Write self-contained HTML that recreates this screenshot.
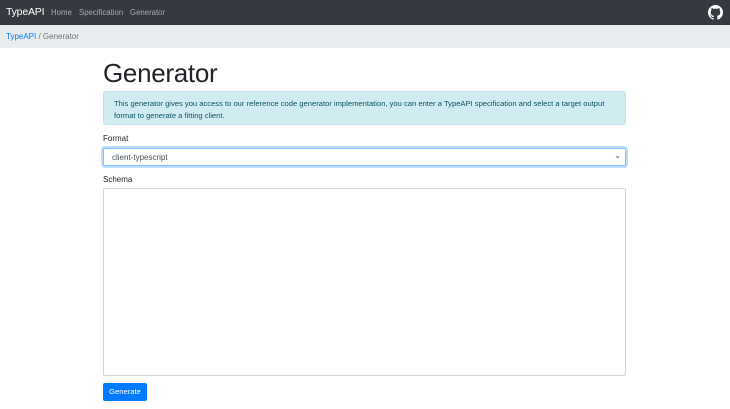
<!DOCTYPE html>
<html><head><style>
*{box-sizing:border-box;margin:0;padding:0}
body{width:730px;height:409px;overflow:hidden;background:#fff;font-family:"Liberation Sans",sans-serif;color:#212529;position:relative}
.nav{position:absolute;left:0;top:0;width:730px;height:25px;background:#343a40}
.brand{position:absolute;left:6px;top:6px;color:#fff;font-size:10.5px;letter-spacing:-0.2px}
.nl{position:absolute;top:7.5px;color:rgba(255,255,255,.55);font-size:7.8px;white-space:nowrap}
.bc{position:absolute;left:0;top:25px;width:730px;height:23px;background:#e9ecef;font-size:8px;color:#6c757d;padding:7px 6px}
.bc a{color:#007bff}
h1{position:absolute;left:103px;top:58px;font-size:26px;font-weight:400;color:#212529;letter-spacing:-0.3px}
.alert{position:absolute;left:103px;top:91px;width:523px;height:34px;background:#d1ecf1;border:1px solid #bee5eb;border-radius:3px;color:#0c5460;font-size:7.6px;line-height:11.5px;padding:6px 10px}
.lbl{position:absolute;left:103px;font-size:8px}
.sel{position:absolute;left:103px;top:148px;width:523px;height:18px;border:1px solid #80bdff;box-shadow:0 0 0 2px rgba(0,123,255,.25);border-radius:2px;font-size:8px;padding:4px 8px;color:#495057}
.sel span{position:absolute;right:4px;top:2px;font-size:8px}
.ta{position:absolute;left:103px;top:188px;width:523px;height:188px;border:1px solid #ced4da;border-radius:2px}
.btn{position:absolute;left:103px;top:383px;width:44px;height:18px;background:#007bff;border-radius:2px;color:#fff;font-size:7.6px;text-align:center;line-height:18px}
</style></head><body>
<div class="nav">
<div class="brand">TypeAPI</div>
<div class="nl" style="left:51px">Home</div>
<div class="nl" style="left:79px">Specification</div>
<div class="nl" style="left:130px">Generator</div>
<svg style="position:absolute;left:708px;top:5px" width="15" height="15" viewBox="0 0 16 16"><path fill="#fff" d="M8 0C3.58 0 0 3.58 0 8c0 3.54 2.29 6.53 5.47 7.59.4.07.55-.17.55-.38 0-.19-.01-.82-.01-1.49-2.01.37-2.530-.49-2.69-.94-.09-.23-.48-.94-.82-1.13-.28-.15-.68-.52-.01-.53.63-.01 1.080.58 1.23.82.72 1.21 1.87.87 2.33.66.07-.52.28-.87.51-1.07-1.78-.2-3.64-.89-3.64-3.95 0-.87.31-1.59.82-2.15-.08-.2-.36-1.02.08-2.12 0 0 .67-.21 2.2.82.64-.18 1.32-.27 2-.27.68 0 1.36.09 2 .27 1.53-1.04 2.2-.82 2.2-.82.44 1.1.16 1.92.08 2.12.51.56.82 1.27.82 2.15 0 3.07-1.87 3.75-3.65 3.95.29.25.54.73.54 1.48 0 1.07-.01 1.93-.01 2.2 0 .21.15.46.55.38A8.013 8.013 0 0016 8c0-4.42-3.58-8-8-8z"/></svg>
</div>
<div class="bc"><a>TypeAPI</a> / Generator</div>
<h1>Generator</h1>
<div class="alert">This generator gives you access to our reference code generator implementation, you can enter a TypeAPI specification and select a target output format to generate a fitting client.</div>
<div class="lbl" style="top:134px">Format</div>
<div class="sel">client-typescript<span>⌄</span></div>
<div class="lbl" style="top:175px">Schema</div>
<div class="ta"></div>
<div class="btn">Generate</div>
</body></html>
